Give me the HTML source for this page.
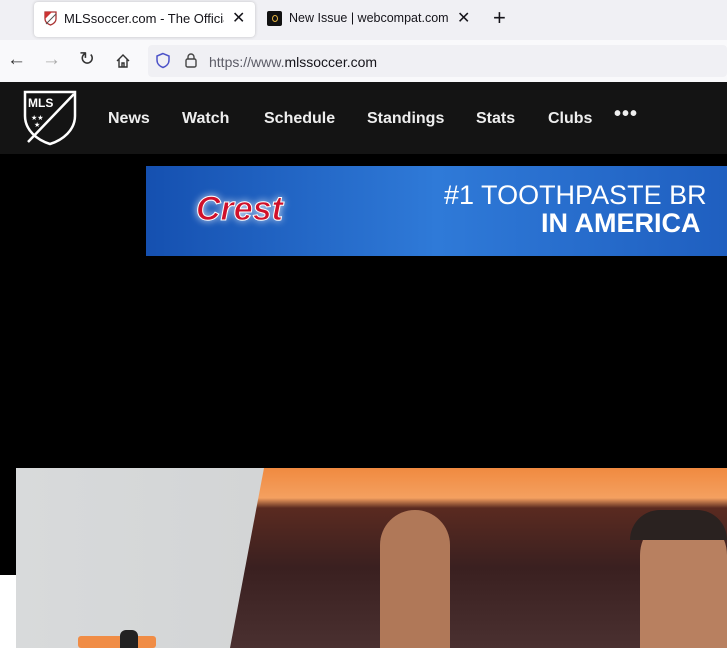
<!DOCTYPE html>
<html><head><style>
*{margin:0;padding:0;box-sizing:border-box}
body{width:727px;height:648px;overflow:hidden;font-family:"Liberation Sans",sans-serif;background:#000;position:relative}
.abs{position:absolute}
</style></head><body>
<div class="abs" style="left:0;top:0;width:727px;height:40px;background:#f0f0f4"></div>
<div class="abs" style="left:34px;top:2px;width:221px;height:35px;background:#fff;border-radius:4px;box-shadow:0 0 3px rgba(0,0,0,.2)"></div>
<svg class="abs" style="left:44px;top:11px" width="13" height="15"><path d="M1 1h11v7c0 3-3 5-5.5 6C4 13 1 11 1 8z" fill="#fff" stroke="#a33" stroke-width="1.3"/><path d="M1 1h7L1 8z" fill="#c33"/><path d="M2 13L12 3" stroke="#555"/></svg>
<div class="abs" style="left:64px;top:11px;font-size:13px;color:#15141a;white-space:nowrap;width:160px;overflow:hidden">MLSsoccer.com - The Official Site</div>
<div class="abs" style="left:232px;top:8px;font-size:16px;color:#15141a">✕</div>
<div class="abs" style="left:267px;top:11px;width:15px;height:15px;background:#111;border-radius:2px"><div style="margin:4px auto;width:6px;height:7px;border:1.5px solid #e3b341;border-radius:50%"></div></div>
<div class="abs" style="left:289px;top:11px;font-size:12.5px;color:#15141a;white-space:nowrap">New Issue | webcompat.com</div>
<div class="abs" style="left:457px;top:8px;font-size:16px;color:#15141a">✕</div>
<div class="abs" style="left:493px;top:5px;font-size:22px;color:#15141a;font-weight:300">+</div>
<div class="abs" style="left:0;top:40px;width:727px;height:42px;background:#f9f9fb"></div>
<div class="abs" style="left:7px;top:49px;font-size:19px;color:#333">←</div>
<div class="abs" style="left:42px;top:49px;font-size:19px;color:#aaa">→</div>
<div class="abs" style="left:79px;top:48px;font-size:19px;color:#333">↻</div>
<svg class="abs" style="left:115px;top:53px" width="16" height="16"><path d="M2 8L8 2l6 6M4 6v8h8V6M7 14v-4h2v4" fill="none" stroke="#333" stroke-width="1.4"/></svg>
<div class="abs" style="left:148px;top:45px;width:579px;height:32px;background:#f0f0f4;border-radius:4px"></div>
<svg class="abs" style="left:155px;top:52px" width="16" height="17"><path d="M8 1.5L2 4v4c0 4 3 6.5 6 7.5 3-1 6-3.5 6-7.5V4z" fill="none" stroke="#4c52c8" stroke-width="1.5"/></svg>
<svg class="abs" style="left:184px;top:52px" width="14" height="17"><rect x="2" y="7" width="10" height="8" rx="1.5" fill="none" stroke="#444" stroke-width="1.4"/><path d="M4 7V5a3 3 0 016 0v2" fill="none" stroke="#444" stroke-width="1.4"/></svg>
<div class="abs" style="left:209px;top:54px;font-size:14px;color:#5b5b66">https://www.<span style="color:#15141a">mlssoccer.com</span></div>
<div class="abs" style="left:0;top:82px;width:727px;height:72px;background:#141414"></div>
<svg class="abs" style="left:23px;top:90px" width="54" height="56"><path d="M2 2h50v24c0 14-12 24-25 28C14 50 2 40 2 26z" fill="none" stroke="#fff" stroke-width="2.5"/><path d="M5 52L51 4" stroke="#fff" stroke-width="2.5"/><text x="5" y="17" fill="#fff" font-size="12" font-weight="bold" font-family="Liberation Sans">MLS</text><text x="8" y="30" fill="#fff" font-size="7">★★</text><text x="11" y="37" fill="#fff" font-size="7">★</text></svg>
<div class="abs" style="left:108px;top:110px;font-size:16px;font-weight:bold;color:#eee">
<span style="position:absolute;left:0">News</span><span style="position:absolute;left:74px">Watch</span><span style="position:absolute;left:156px">Schedule</span><span style="position:absolute;left:259px;white-space:nowrap">Standings</span><span style="position:absolute;left:368px">Stats</span><span style="position:absolute;left:440px">Clubs</span><span style="position:absolute;left:506px;top:-7px;font-size:20px;letter-spacing:1px">•••</span></div>
<div class="abs" style="left:146px;top:166px;width:581px;height:90px;background:linear-gradient(90deg,#1550b0,#2f7ad8 50%,#1f5fc0)"></div>
<div class="abs" style="left:196px;top:190px;font-size:34px;font-weight:bold;font-style:italic;color:#d0102a;-webkit-text-stroke:1px #fff;text-shadow:0 0 8px #fff">Crest</div>
<div class="abs" style="left:444px;top:180px;font-size:27px;color:#fff;white-space:nowrap;font-weight:300"><b>#1</b> TOOTHPASTE BR</div>
<div class="abs" style="left:541px;top:208px;font-size:27px;color:#fff;font-weight:bold;white-space:nowrap">IN AMERICA</div>
<div class="abs" style="left:0;top:575px;width:16px;height:73px;background:#fff"></div>
<div class="abs" style="left:16px;top:468px;width:711px;height:180px;background:linear-gradient(90deg,#d8dadb,#c9cbcc)"></div>
<div class="abs" style="left:230px;top:468px;width:497px;height:180px;clip-path:polygon(34px 0,100% 0,100% 100%,0 100%);background:linear-gradient(180deg,#f08a40 0,#f4a060 30px,#5a2a20 40px,#3a2020 100px,#4a3030 180px)"></div>
<div class="abs" style="left:380px;top:510px;width:70px;height:138px;background:#b07858;border-radius:35px 35px 0 0"></div>
<div class="abs" style="left:640px;top:515px;width:87px;height:133px;background:#b88060;border-radius:40px 40px 0 0"></div>
<div class="abs" style="left:630px;top:510px;width:97px;height:30px;background:#2a2220;border-radius:40px 40px 0 0"></div>
<div class="abs" style="left:78px;top:636px;width:78px;height:12px;background:#f08c45;border-radius:3px"></div>
<div class="abs" style="left:120px;top:630px;width:18px;height:18px;background:#222;border-radius:6px 6px 0 0"></div>
</body></html>
